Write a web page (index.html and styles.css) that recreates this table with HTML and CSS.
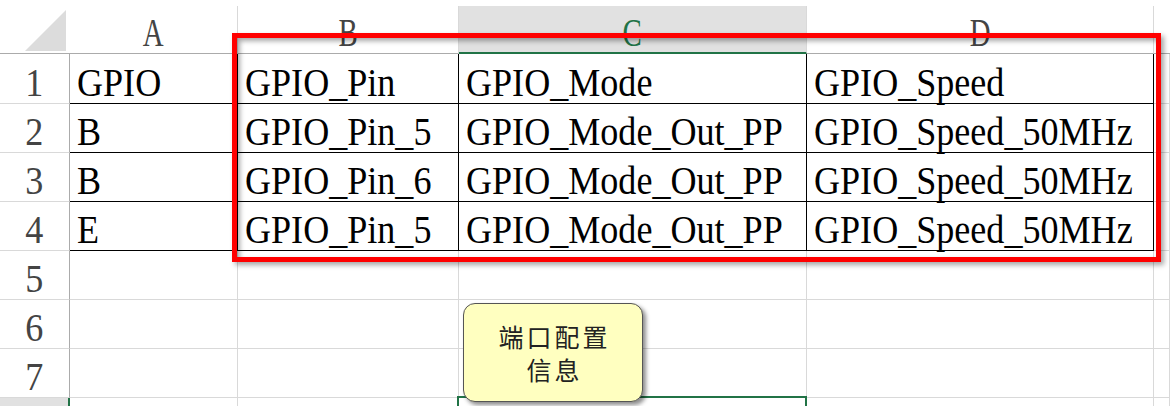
FILE: index.html
```html
<!DOCTYPE html>
<html lang="zh">
<head>
<meta charset="utf-8">
<title>GPIO</title>
<link rel="stylesheet" href="styles.css">
</head>
<body>
<div class="sheet">
  <div class="corner"><span class="tri"></span></div>
  <div class="ch"><span class="t">A</span></div>
  <div class="ch"><span class="t">B</span></div>
  <div class="ch active"><span class="t">C</span></div>
  <div class="ch"><span class="t">D</span></div>
  <div class="ch last"></div>

  <div class="rh"><span class="t">1</span></div>
  <div class="c b"><span class="t">GPIO</span></div>
  <div class="c b"><span class="t">GPIO_Pin</span></div>
  <div class="c b"><span class="t">GPIO_Mode</span></div>
  <div class="c b"><span class="t">GPIO_Speed</span></div>
  <div class="c"></div>

  <div class="rh"><span class="t">2</span></div>
  <div class="c b"><span class="t">B</span></div>
  <div class="c b"><span class="t">GPIO_Pin_5</span></div>
  <div class="c b"><span class="t">GPIO_Mode_Out_PP</span></div>
  <div class="c b"><span class="t">GPIO_Speed_50MHz</span></div>
  <div class="c"></div>

  <div class="rh"><span class="t">3</span></div>
  <div class="c b"><span class="t">B</span></div>
  <div class="c b"><span class="t">GPIO_Pin_6</span></div>
  <div class="c b"><span class="t">GPIO_Mode_Out_PP</span></div>
  <div class="c b"><span class="t">GPIO_Speed_50MHz</span></div>
  <div class="c"></div>

  <div class="rh"><span class="t">4</span></div>
  <div class="c b"><span class="t">E</span></div>
  <div class="c b"><span class="t">GPIO_Pin_5</span></div>
  <div class="c b"><span class="t">GPIO_Mode_Out_PP</span></div>
  <div class="c b"><span class="t">GPIO_Speed_50MHz</span></div>
  <div class="c"></div>

  <div class="rh"><span class="t">5</span></div>
  <div class="c"></div><div class="c"></div><div class="c"></div><div class="c"></div><div class="c"></div>

  <div class="rh"><span class="t">6</span></div>
  <div class="c"></div><div class="c"></div><div class="c"></div><div class="c"></div><div class="c"></div>

  <div class="rh"><span class="t">7</span></div>
  <div class="c"></div><div class="c"></div><div class="c"></div><div class="c"></div><div class="c"></div>

  <div class="rh active"></div>
  <div class="c open"></div><div class="c open"></div><div class="c open sel"></div><div class="c open"></div><div class="c open"></div>
</div>

<div class="redbox"></div>
<div class="note"><span>端口配置</span><span>信息</span></div>
</body>
</html>
```
FILE: styles.css
```css
html, body {
  margin: 0;
  padding: 0;
  background: #ffffff;
  overflow: hidden;
  width: 1170px;
  height: 406px;
}

.sheet {
  margin-top: 6px;
  height: 400px;
  overflow: hidden;
  display: grid;
  grid-template-columns: 70px 168px 221px 348px 347px 1fr;
  grid-template-rows: 48px 50px repeat(6, 49px) 8px;
  font-family: "Liberation Serif", "Times New Roman", serif;
}

.sheet > div {
  box-sizing: border-box;
  display: flex;
  align-items: flex-end;
  overflow: visible;
  white-space: nowrap;
}

.t {
  display: inline-block;
  font-size: 41px;
  line-height: 40px;
  transform: scaleX(0.88);
  transform-origin: 0 100%;
}

.corner {
  border-bottom: 1px solid #ababab;
  justify-content: flex-end;
  padding: 0 4px 2px 0;
}

.tri {
  width: 41px;
  height: 41px;
  background: #dcdcdc;
  clip-path: polygon(100% 0, 100% 100%, 0 100%);
}

.ch {
  border-right: 1px solid #d9d9d9;
  border-bottom: 1px solid #ababab;
  justify-content: center;
  color: #444444;
  padding-bottom: 0;
}

.ch .t {
  font-size: 39px;
  line-height: 40px;
  transform: scaleX(0.74);
  transform-origin: 50% 100%;
}

.rh .t {
  transform-origin: 50% 100%;
}

.ch.active {
  background: #e1e1e1;
  border-bottom: 2px solid #217346;
  color: #217346;
}

.ch.active .t {
  margin-bottom: -1px;
}

.ch.last {
  border-right: none;
}

.rh {
  border-right: 1px solid #ababab;
  border-bottom: 1px solid #d9d9d9;
  justify-content: center;
  color: #444444;
  padding-bottom: 1px;
}

.rh.active {
  background: #e1e1e1;
  border-right: 2px solid #217346;
  border-bottom: none;
}

.c {
  border-right: 1px solid #d9d9d9;
  border-bottom: 1px solid #d9d9d9;
  padding-left: 7px;
  padding-bottom: 1px;
  color: #000000;
}

.c.b {
  border-right: 1px solid #000000;
  border-bottom: 1px solid #000000;
}

.c.open {
  border-bottom: none;
}

.c.sel {
  position: relative;
}

.c.sel::after {
  content: "";
  position: absolute;
  left: -2px;
  top: -2px;
  right: -1px;
  bottom: -4px;
  border: 2px solid #217346;
}

.redbox {
  position: absolute;
  left: 232px;
  top: 33px;
  width: 929px;
  height: 229px;
  box-sizing: border-box;
  border: 5px solid #ff0000;
  box-shadow: 3px 3px 5px rgba(0, 0, 0, 0.35), inset 3px 3px 5px rgba(0, 0, 0, 0.35);
}

.note {
  position: absolute;
  left: 463px;
  top: 303px;
  width: 180px;
  height: 99px;
  box-sizing: border-box;
  border: 1px solid #555555;
  border-radius: 12px;
  background: #ffffc0;
  box-shadow: 3px 3px 4px rgba(0, 0, 0, 0.45);
  display: flex;
  flex-direction: column;
  align-items: center;
  justify-content: center;
  font-family: "Noto Sans CJK SC", sans-serif;
  font-size: 25px;
  line-height: 33px;
  letter-spacing: 3px;
  color: #222222;
  padding-left: 3px;
}
```
